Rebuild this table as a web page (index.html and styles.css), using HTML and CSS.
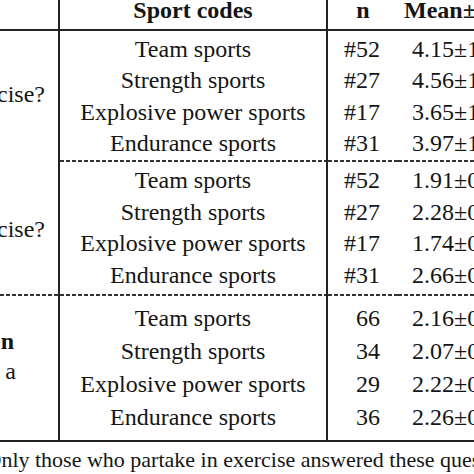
FILE: index.html
```html
<!DOCTYPE html>
<html>
<head>
<meta charset="utf-8">
<title>Sport codes table</title>
<link rel="stylesheet" href="styles.css">
</head>
<body>
<div class="page">
  <div class="tbl">
    <div class="cell hd lbl-col"></div>
    <div class="cell hd sport-col">Sport codes</div>
    <div class="cell hd n-col">n</div>
    <div class="cell hd mean-col">Mean±SD</div>

    <div class="cell lbl-col lbl lbl1"><div class="ln q">How often do you exercise?</div></div>
    <div class="cell sport-col stack b1 dash">
      <div class="row">Team sports</div>
      <div class="row">Strength sports</div>
      <div class="row">Explosive power sports</div>
      <div class="row">Endurance sports</div>
    </div>
    <div class="cell n-col stack b1 dash">
      <div class="row">#52</div>
      <div class="row">#27</div>
      <div class="row">#17</div>
      <div class="row">#31</div>
    </div>
    <div class="cell mean-col stack b1 dash">
      <div class="row">4.15±1.12</div>
      <div class="row">4.56±1.05</div>
      <div class="row">3.65±1.22</div>
      <div class="row">3.97±1.14</div>
    </div>

    <div class="cell lbl-col lbl lbl2 dash"><div class="ln q">How long do you exercise?</div></div>
    <div class="cell sport-col stack b2 dash">
      <div class="row">Team sports</div>
      <div class="row">Strength sports</div>
      <div class="row">Explosive power sports</div>
      <div class="row">Endurance sports</div>
    </div>
    <div class="cell n-col stack b2 dash">
      <div class="row">#52</div>
      <div class="row">#27</div>
      <div class="row">#17</div>
      <div class="row">#31</div>
    </div>
    <div class="cell mean-col stack b2 dash">
      <div class="row">1.91±0.81</div>
      <div class="row">2.28±0.93</div>
      <div class="row">1.74±0.78</div>
      <div class="row">2.66±0.87</div>
    </div>

    <div class="cell lbl-col lbl lbl3 solid">
      <div class="ln bold">Perception</div>
      <div class="ln second">of fitness as a</div>
    </div>
    <div class="cell sport-col stack b3 solid">
      <div class="row">Team sports</div>
      <div class="row">Strength sports</div>
      <div class="row">Explosive power sports</div>
      <div class="row">Endurance sports</div>
    </div>
    <div class="cell n-col stack b3 solid">
      <div class="row">66</div>
      <div class="row">34</div>
      <div class="row">29</div>
      <div class="row">36</div>
    </div>
    <div class="cell mean-col stack b3 solid">
      <div class="row">2.16±0.74</div>
      <div class="row">2.07±0.82</div>
      <div class="row">2.22±0.69</div>
      <div class="row">2.26±0.71</div>
    </div>
  </div>
  <p class="note"><span class="note-text">Only those who partake in exercise answered these questions.</span></p>
</div>
</body>
</html>
```
FILE: styles.css
```css
* {
  box-sizing: border-box;
  margin: 0;
  padding: 0;
}

html,
body {
  width: 474px;
  height: 474px;
  overflow: hidden;
  background: #ffffff;
}

body {
  font-family: "Liberation Serif", "Times New Roman", serif;
  font-size: 24px;
  color: #151515;
}

.page {
  width: 474px;
  height: 474px;
  overflow: hidden;
}

.tbl {
  display: grid;
  grid-template-columns: 60px 268px 70px 240px;
  width: 638px;
}

.cell {
  white-space: nowrap;
}

.lbl-col {
  border-right: 2px solid #222;
}

.sport-col {
  border-right: 2px solid #222;
  text-align: center;
}

.n-col {
  text-align: right;
  padding-right: 18px;
}

.mean-col {
  padding-left: 14px;
}

/* header row */
.hd {
  height: 31px;
  border-bottom: 2px solid #222;
  font-weight: bold;
  line-height: 20px;
}

.hd.n-col {
  text-align: center;
  padding-right: 0;
}

.hd.mean-col {
  padding-left: 6px;
}

/* dashed separators */
.dash {
  background-image: linear-gradient(to right, #333 0 4px, transparent 4px);
  background-size: 6px 2px;
  background-repeat: repeat-x;
  background-position: left bottom;
}

.solid {
  border-bottom: 2px solid #222;
}

/* stacked rows */
.b1 {
  padding-top: 2.5px;
  padding-bottom: 2px;
}

.b1 .row {
  height: 31.5px;
  line-height: 31.5px;
}

.b2 {
  padding-top: 3.5px;
  padding-bottom: 4.5px;
}

.b2 .row {
  height: 31.7px;
  line-height: 31.7px;
}

.b3 {
  padding-top: 6px;
  padding-bottom: 6px;
}

.b3 .row {
  height: 33px;
  line-height: 33px;
}

/* left labels (cropped on the left) */
.lbl {
  display: flex;
  flex-direction: column;
  align-items: flex-end;
}

.ln {
  white-space: nowrap;
}

.q {
  line-height: 32px;
  margin-right: 13px;
}

.lbl1 {
  padding-top: 47px;
}

.lbl2 {
  padding-top: 51px;
}

.lbl3 {
  padding-top: 30px;
}

.lbl3 .ln {
  line-height: 30px;
}

.bold {
  font-weight: bold;
  margin-right: 44px;
}

.second {
  margin-right: 42px;
}

/* footnote */
.note {
  margin-top: 3px;
  font-size: 22px;
  line-height: 30px;
  white-space: nowrap;
}

.note-text {
  display: inline-block;
  margin-left: -14.5px;
}
```
